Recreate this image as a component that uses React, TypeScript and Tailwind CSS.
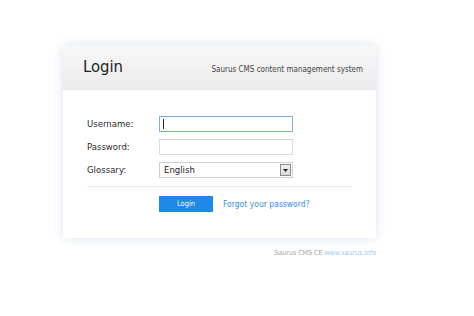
export default function App() {
  return (
    <div
      className="w-[474px] h-[316px] bg-white text-[#2b2b2b] font-stretch-condensed"
      style={{ fontFamily: '"DejaVu Sans Condensed", "DejaVu Sans", sans-serif' }}
    >
      <div className="pt-[45px] pl-[63px]">
        <div className="w-[313px] bg-white shadow-[0_0_10px_rgba(170,190,215,0.45)]">
          {/* Header */}
          <div className="h-[45px] bg-gradient-to-b from-[#f8f8f8] to-[#ebebeb] flex items-center justify-between pl-[20px] pr-[13px]">
            <span className="text-[16.5px] text-[#222] leading-none">Login</span>
            <span className="text-[8px] text-[#444] mt-[4px]">Saurus CMS content management system</span>
          </div>

          {/* Form */}
          <div className="pt-[26px] pb-[26px] pl-[24px] pr-[24px]">
            <div className="flex flex-col gap-[7px]">
              <div className="flex items-center h-[16px]">
                <span className="w-[72px] text-[9.5px]">Username:</span>
                <div className="w-[134px] h-[16px] border border-[#7fb2e0] bg-white flex items-center pl-[3px]">
                  <div className="w-px h-[10px] bg-[#222]" />
                </div>
              </div>
              <div className="flex items-center h-[16px]">
                <span className="w-[72px] text-[9.5px]">Password:</span>
                <div className="w-[134px] h-[16px] border border-[#dcdcdc] border-t-[#d8cfc8] bg-white" />
              </div>
              <div className="flex items-center h-[16px]">
                <span className="w-[72px] text-[9.5px]">Glossary:</span>
                <div className="w-[134px] h-[16px] border border-[#cfcfcf] bg-white flex items-center justify-between pl-[4px] pr-[1px]">
                  <span className="text-[9.5px] text-[#222]">English</span>
                  <div className="w-[11px] h-[12px] border border-[#8a8a8a] bg-gradient-to-b from-[#f2f2f2] to-[#d8d8d8] flex items-center justify-center">
                    <svg width="5" height="3" viewBox="0 0 5 3">
                      <path d="M0 0h5L2.5 3z" fill="#222" />
                    </svg>
                  </div>
                </div>
              </div>
            </div>

            <div className="mt-[8px] border-t border-[#e8e8e8]" />

            <div className="mt-[9px] flex items-center pl-[72px] gap-[10px]">
              <button className="w-[54px] h-[16px] bg-[#1e8ae6] text-white text-[7.5px] flex items-center justify-center">
                Login
              </button>
              <a className="text-[8.5px] text-[#3a8fd6]">Forgot your password?</a>
            </div>
          </div>
        </div>
        <div className="w-[313px] flex justify-end mt-[10px] text-[7px]">
          <span className="text-[#a3a3a3]">Saurus CMS CE&nbsp;</span>
          <span className="text-[#9cc8ee]">www.saurus.info</span>
        </div>
      </div>
    </div>
  );
}
